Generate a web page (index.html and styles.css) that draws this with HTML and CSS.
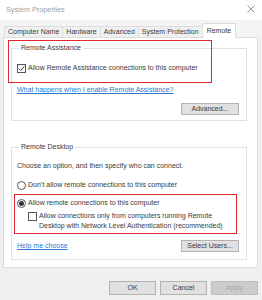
FILE: index.html
```html
<!DOCTYPE html>
<html>
<head>
<meta charset="utf-8">
<link rel="stylesheet" href="styles.css">
</head>
<body>
<div class="window">
  <div class="titlebar">
    <span class="title">System Properties</span>
    <svg class="close" width="8" height="8" viewBox="0 0 8 8"><path d="M0.5 0.5 L7.5 7.5 M7.5 0.5 L0.5 7.5" stroke="#8a8a8a" stroke-width="0.9" fill="none"/></svg>
  </div>
  <div class="tabs">
    <div class="tab">Computer Name</div>
    <div class="tab">Hardware</div>
    <div class="tab">Advanced</div>
    <div class="tab">System Protection</div>
    <div class="tab active">Remote</div>
  </div>
  <div class="panel">
    <fieldset class="group ra">
      <legend>Remote Assistance</legend>
      <div class="option">
        <span class="box"><svg width="7" height="7" viewBox="0 0 7 7"><path d="M1 3.6 L2.8 5.4 L6.2 1.4" stroke="#333" stroke-width="1" fill="none"/></svg></span>
        <span>Allow Remote Assistance connections to this computer</span>
      </div>
      <a class="link ra-link">What happens when I enable Remote Assistance?</a>
      <div class="btnrow"><button class="btn">Advanced...</button></div>
    </fieldset>
    <fieldset class="group rd">
      <legend>Remote Desktop</legend>
      <p class="intro">Choose an option, and then specify who can connect.</p>
      <div class="option radio-off">
        <span class="radio"></span>
        <span>Don’t allow remote connections to this computer</span>
      </div>
      <div class="highlight">
        <div class="option">
          <span class="radio on"><span class="dot"></span></span>
          <span>Allow remote connections to this computer</span>
        </div>
        <div class="option sub">
          <span class="box"></span>
          <span>Allow connections only from computers running Remote<br>Desktop with Network Level Authentication (recommended)</span>
        </div>
      </div>
      <div class="rowbetween">
        <a class="link">Help me choose</a>
        <button class="btn">Select Users...</button>
      </div>
    </fieldset>
    <div class="annot"></div>
  </div>
  <div class="footer">
    <button class="btn fbtn">OK</button>
    <button class="btn fbtn">Cancel</button>
    <button class="btn fbtn disabled">Apply</button>
  </div>
</div>
</body>
</html>
```
FILE: styles.css
```css
* { box-sizing: border-box; }
html, body { margin: 0; padding: 0; }
body {
  width: 262px;
  height: 300px;
  overflow: hidden;
  background: #f0f0f0;
  font-family: "Liberation Sans", Arial, sans-serif;
  font-size: 7px;
  color: #3a3a3a;
}
.window { width: 262px; height: 300px; }
.titlebar {
  height: 20px;
  background: #ffffff;
  display: flex;
  align-items: center;
  justify-content: space-between;
  padding: 0 7px 2px 6px;
}
.title { color: #a0a0a0; font-size: 7.2px; }
.close { display: block; }
.tabs {
  height: 17px;
  display: flex;
  align-items: flex-end;
  padding-left: 4px;
  background: #f4f4f4;
}
.tab {
  height: 11px;
  line-height: 10px;
  padding: 0 3px;
  border: 1px solid #dedede;
  border-bottom: none;
  margin-right: -1px;
  background: #f0f0f0;
  white-space: nowrap;
}
.tab.active {
  height: 15px;
  line-height: 13px;
  background: #ffffff;
  margin-bottom: -1px;
  position: relative;
  z-index: 1;
  padding: 0 4px;
}
.panel {
  position: relative;
  margin: 0 4px 0 3px;
  height: 231px;
  background: #ffffff;
  border: 1px solid #dcdcdc;
  padding: 5px 10px 0 7px;
}
.group {
  margin: 0;
  padding: 0 7px 5px 5px;
  border: 1px solid #e0e0e0;
  min-width: 0;
}
.group legend {
  padding: 0 2px;
  margin-left: 2px;
  line-height: 10px;
}
.option {
  display: flex;
  align-items: center;
  line-height: 10px;
  white-space: nowrap;
}
.ra .option { margin-top: 10px; }
.box {
  width: 9px;
  height: 9px;
  border: 1px solid #555;
  background: #fff;
  margin-right: 2px;
  display: flex;
  align-items: center;
  justify-content: center;
  flex: none;
}
.box svg { display: block; }
.radio {
  width: 9px;
  height: 9px;
  border: 1px solid #555;
  border-radius: 50%;
  margin-right: 2px;
  flex: none;
  display: flex;
  align-items: center;
  justify-content: center;
}
.dot { width: 5px; height: 5px; border-radius: 50%; background: #333; }
.link {
  display: block;
  color: #2b78d4;
  text-decoration: underline;
  line-height: 10px;
  white-space: nowrap;
}
.ra-link { margin-top: 12px; }
.btnrow { display: flex; justify-content: flex-end; margin-top: 8px; }
.btn {
  font-family: inherit;
  font-size: 7px;
  color: #3a3a3a;
  height: 12px;
  width: 58px;
  padding: 0;
  background: #e1e1e1;
  border: 1px solid #b3b3b3;
  line-height: 10px;
}
.rd { margin-top: 21px; padding-bottom: 7px; }
.intro { margin: 9px 0 0; line-height: 10px; }
.radio-off { margin-top: 9px; }
.highlight {
  margin: 4px 2px 0 -3px;
  border: 1.5px solid #e4262f;
  padding: 3px 0 2px 2px;
}
.option.sub {
  align-items: flex-start;
  margin-top: 3px;
  padding-left: 11px;
}
.option.sub .box { margin-top: 1px; margin-right: 2px; }
.rowbetween {
  display: flex;
  justify-content: space-between;
  align-items: center;
  margin-top: 6px;
}
.annot {
  position: absolute;
  left: 4px;
  top: 2px;
  width: 204px;
  height: 43px;
  border: 1.5px solid #e4262f;
}
.footer {
  display: flex;
  justify-content: flex-end;
  gap: 4px;
  padding: 13px 4px 0 0;
}
.fbtn { width: 47px; height: 14px; }
.fbtn.disabled { color: #a8a8a8; background: #cccccc; border-color: #bfbfbf; }
```
